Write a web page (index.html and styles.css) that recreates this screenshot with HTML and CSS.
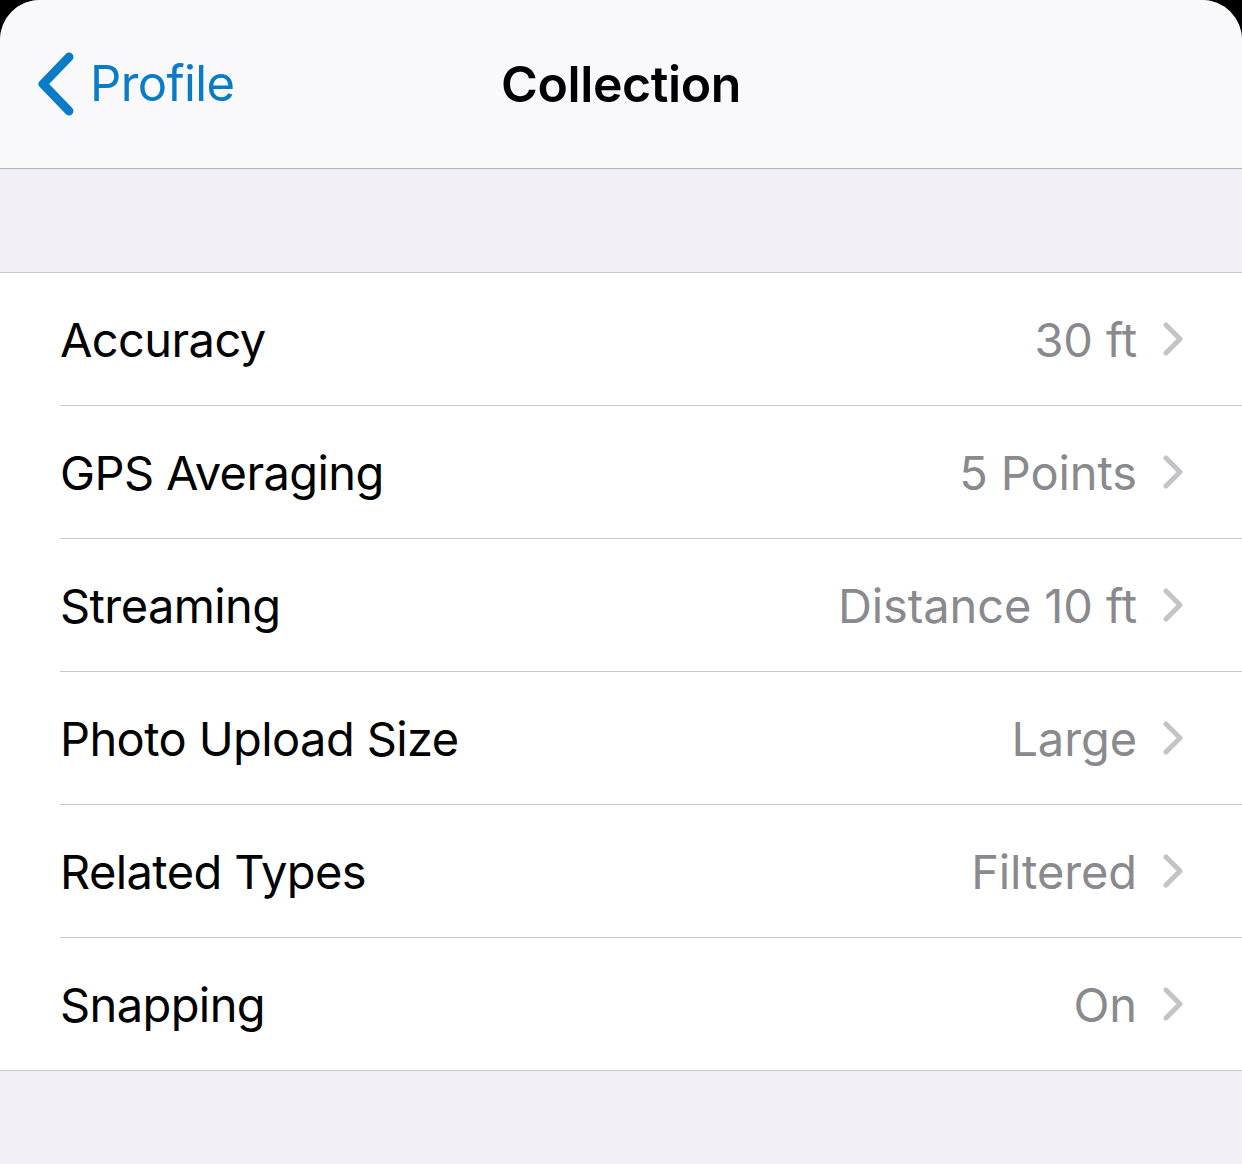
FILE: index.html
```html
<!DOCTYPE html>
<html>
<head>
<meta charset="utf-8">
<link rel="stylesheet" href="styles.css">
</head>
<body>
<div class="sheet">
  <header class="nav">
    <div class="back">
      <svg class="back-icon" width="40" height="64" viewBox="0 0 40 64"><path d="M33 5 L7 32 L33 59" fill="none" stroke="#0a7bc6" stroke-width="9" stroke-linecap="round" stroke-linejoin="round"/></svg>
      <span class="back-label">Profile</span>
    </div>
    <h1 class="title">Collection</h1>
  </header>
  <div class="gap"></div>
  <ul class="list">
    <li class="row"><span class="label">Accuracy</span><span class="value">30 ft</span><svg class="chev" width="22" height="34" viewBox="0 0 22 34"><path d="M4 3 L18 17 L4 31" fill="none" stroke="#c4c4c7" stroke-width="5" stroke-linecap="round" stroke-linejoin="round"/></svg></li>
    <li class="row"><span class="label">GPS Averaging</span><span class="value">5 Points</span><svg class="chev" width="22" height="34" viewBox="0 0 22 34"><path d="M4 3 L18 17 L4 31" fill="none" stroke="#c4c4c7" stroke-width="5" stroke-linecap="round" stroke-linejoin="round"/></svg></li>
    <li class="row"><span class="label">Streaming</span><span class="value">Distance 10 ft</span><svg class="chev" width="22" height="34" viewBox="0 0 22 34"><path d="M4 3 L18 17 L4 31" fill="none" stroke="#c4c4c7" stroke-width="5" stroke-linecap="round" stroke-linejoin="round"/></svg></li>
    <li class="row"><span class="label">Photo Upload Size</span><span class="value">Large</span><svg class="chev" width="22" height="34" viewBox="0 0 22 34"><path d="M4 3 L18 17 L4 31" fill="none" stroke="#c4c4c7" stroke-width="5" stroke-linecap="round" stroke-linejoin="round"/></svg></li>
    <li class="row"><span class="label">Related Types</span><span class="value">Filtered</span><svg class="chev" width="22" height="34" viewBox="0 0 22 34"><path d="M4 3 L18 17 L4 31" fill="none" stroke="#c4c4c7" stroke-width="5" stroke-linecap="round" stroke-linejoin="round"/></svg></li>
    <li class="row"><span class="label">Snapping</span><span class="value">On</span><svg class="chev" width="22" height="34" viewBox="0 0 22 34"><path d="M4 3 L18 17 L4 31" fill="none" stroke="#c4c4c7" stroke-width="5" stroke-linecap="round" stroke-linejoin="round"/></svg></li>
  </ul>
  <div class="footer"></div>
</div>
</body>
</html>
```
FILE: styles.css
```css
* { box-sizing: border-box; }
html, body {
  margin: 0;
  padding: 0;
  background: #000;
  width: 1242px;
  height: 1164px;
  overflow: hidden;
}
body {
  font-family: Inter, "Noto Sans", sans-serif;
  -webkit-font-smoothing: antialiased;
}
.sheet {
  width: 1242px;
  height: 1164px;
  background: #f2f0f6;
  border-radius: 40px 40px 0 0;
  overflow: hidden;
  display: flex;
  flex-direction: column;
}
.nav {
  height: 169px;
  flex: none;
  background: #f9f9fc;
  border-bottom: 1.5px solid #b3b3b6;
  display: flex;
  align-items: center;
  justify-content: center;
  position: relative;
}
.back {
  position: absolute;
  left: 36px;
  top: 52px;
  display: flex;
  align-items: center;
  gap: 14px;
}
.back-icon { display: block; }
.back-label {
  color: #0a7bc6;
  font-size: 49px;
  letter-spacing: -0.6px;
  line-height: 64px;
}
.title {
  margin: 0;
  font-size: 50px;
  font-weight: 600;
  letter-spacing: -0.4px;
  color: #000;
  line-height: 1;
}
.gap {
  height: 104px;
  flex: none;
  border-bottom: 1.5px solid #c8c7cc;
}
.list {
  list-style: none;
  margin: 0;
  padding: 0 0 0 60px;
  background: #fff;
  flex: none;
  border-bottom: 1.5px solid #c8c7cc;
}
.row {
  height: 133px;
  display: flex;
  align-items: center;
  padding-right: 58px;
  border-bottom: 1.5px solid #c8c7cc;
}
.row:last-child { border-bottom: none; height: 132px; }
.label {
  flex: 1;
  font-size: 47px;
  letter-spacing: -0.6px;
  color: #000;
}
.value {
  font-size: 47px;
  letter-spacing: -0.1px;
  color: #8a8a8e;
  margin-right: 25px;
}
.chev { display: block; flex: none; }
.footer { flex: 1; }
```
